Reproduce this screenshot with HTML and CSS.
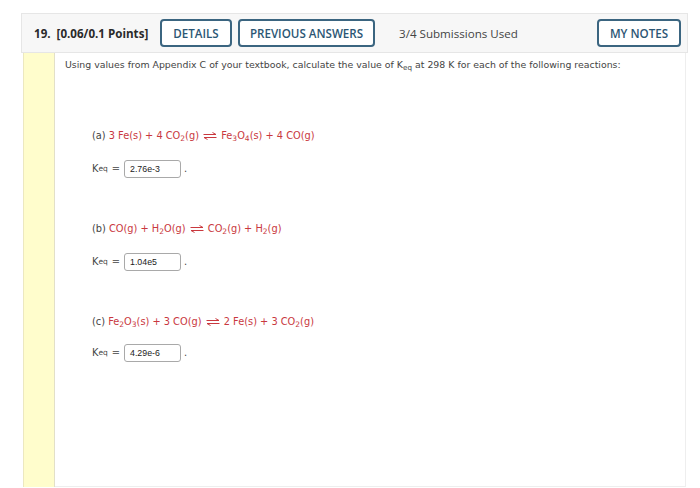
FILE: index.html
```html
<!DOCTYPE html>
<html>
<head>
<meta charset="utf-8">
<link rel="stylesheet" href="styles.css">
</head>
<body>
<div class="question">
  <div class="qhead">
    <span class="qnum">19.&nbsp; [0.06/0.1 Points]</span>
    <span class="btn btn-details">DETAILS</span>
    <span class="btn btn-prev">PREVIOUS ANSWERS</span>
    <span class="subs">3/4 Submissions Used</span>
    <span class="btn btn-notes">MY NOTES</span>
  </div>
  <div class="qbody">
    <div class="strip"></div>
    <div class="content">
      <p class="intro">Using values from Appendix C of your textbook, calculate the value of K<sub>eq</sub> at 298 K for each of the following reactions:</p>

      <div class="part part-a">
        <p class="rxn">(a) <span class="red">3 Fe(s) + 4 CO<sub>2</sub>(g) <svg class="arrow" width="14" height="8" viewBox="0 0 14 8"><path d="M0.5 2.5H13L9.5 0.5M13.5 5.5H1L4.5 7.5" fill="none" stroke="currentColor" stroke-width="1"/></svg> Fe<sub>3</sub>O<sub>4</sub>(s) + 4 CO(g)</span></p>
        <p class="keq">K<sub>eq</sub> <span class="eq">=</span> <span class="box">2.76e-3</span> <span class="dot">.</span></p>
      </div>

      <div class="part part-b">
        <p class="rxn">(b) <span class="red">CO(g) + H<sub>2</sub>O(g) <svg class="arrow" width="14" height="8" viewBox="0 0 14 8"><path d="M0.5 2.5H13L9.5 0.5M13.5 5.5H1L4.5 7.5" fill="none" stroke="currentColor" stroke-width="1"/></svg> CO<sub>2</sub>(g) + H<sub>2</sub>(g)</span></p>
        <p class="keq">K<sub>eq</sub> <span class="eq">=</span> <span class="box">1.04e5</span> <span class="dot">.</span></p>
      </div>

      <div class="part part-c">
        <p class="rxn">(c) <span class="red">Fe<sub>2</sub>O<sub>3</sub>(s) + 3 CO(g) <svg class="arrow" width="14" height="8" viewBox="0 0 14 8"><path d="M0.5 2.5H13L9.5 0.5M13.5 5.5H1L4.5 7.5" fill="none" stroke="currentColor" stroke-width="1"/></svg> 2 Fe(s) + 3 CO<sub>2</sub>(g)</span></p>
        <p class="keq">K<sub>eq</sub> <span class="eq">=</span> <span class="box">4.29e-6</span> <span class="dot">.</span></p>
      </div>
    </div>
  </div>
</div>
</body>
</html>
```
FILE: styles.css
```css
html, body {
  margin: 0;
  padding: 0;
  background: #ffffff;
}
.question {
  margin: 13px 0 0 21px;
  width: 667px;
}
.qhead {
  box-sizing: border-box;
  height: 40px;
  background: #f7f7f7;
  border: 1px solid #e6e6e6;
  display: flex;
  align-items: center;
  padding-left: 12px;
  font-family: "Open Sans", sans-serif;
  font-size: 11.6px;
  color: #333;
}
.qnum {
  font-weight: 700;
  color: #2a2a2a;
  width: 126px;
}
.btn {
  box-sizing: border-box;
  height: 28px;
  border: 2px solid #3b6580;
  border-radius: 4px;
  color: #2b5674;
  font-weight: 600;
  display: inline-flex;
  align-items: center;
  justify-content: center;
  background: #fff;
}
.btn-details { width: 72px; }
.btn-prev { width: 137px; margin-left: 6px; }
.btn-notes { width: 84px; margin-left: auto; margin-right: 6px; }
.subs {
  margin-left: 24px;
  color: #444;
}
.qbody {
  display: flex;
  margin-left: 2px;
  width: 663px;
  height: 434px;
}
.strip {
  width: 30px;
  background: #fffdcc;
  border-left: 1px solid #ece8c0;
  border-right: 1px solid #e3e0c8;
}
.content {
  flex: 1;
  border-right: 1px solid #eeeeee;
  border-bottom: 1px solid #eeeeee;
  padding: 5px 0 0 10px;
  font-family: "DejaVu Sans", Verdana, sans-serif;
  font-size: 9.4px;
  color: #444;
}
p { margin: 0; }
sub {
  font-size: 7.2px;
  vertical-align: -2px;
  line-height: 0;
}
.intro {
  line-height: 14px;
}
.part {
  margin-left: 27px;
  font-size: 9.8px;
}
.part sub { font-size: 7.5px; }
.part-a { margin-top: 57px; }
.part-b { margin-top: 44px; }
.part-c { margin-top: 44px; }
.rxn { line-height: 14px; }
.red { color: #c9383e; }
.arrow {
  vertical-align: -0.5px;
  margin: 0 1px;
}
.keq {
  margin-top: 17px;
  display: flex;
  align-items: center;
  line-height: 16px;
}
.part-c .keq { margin-top: 15px; }
.eq { margin: 0 4px 0 4px; color: #666; }
.box {
  box-sizing: border-box;
  display: inline-block;
  width: 57px;
  height: 18px;
  border: 1px solid #a9a9a9;
  border-radius: 3px;
  padding: 0 0 0 5px;
  font-family: "Liberation Sans", Arial, sans-serif;
  font-size: 8.8px;
  line-height: 16px;
  color: #222;
}
.dot { margin-left: 3px; }
```
